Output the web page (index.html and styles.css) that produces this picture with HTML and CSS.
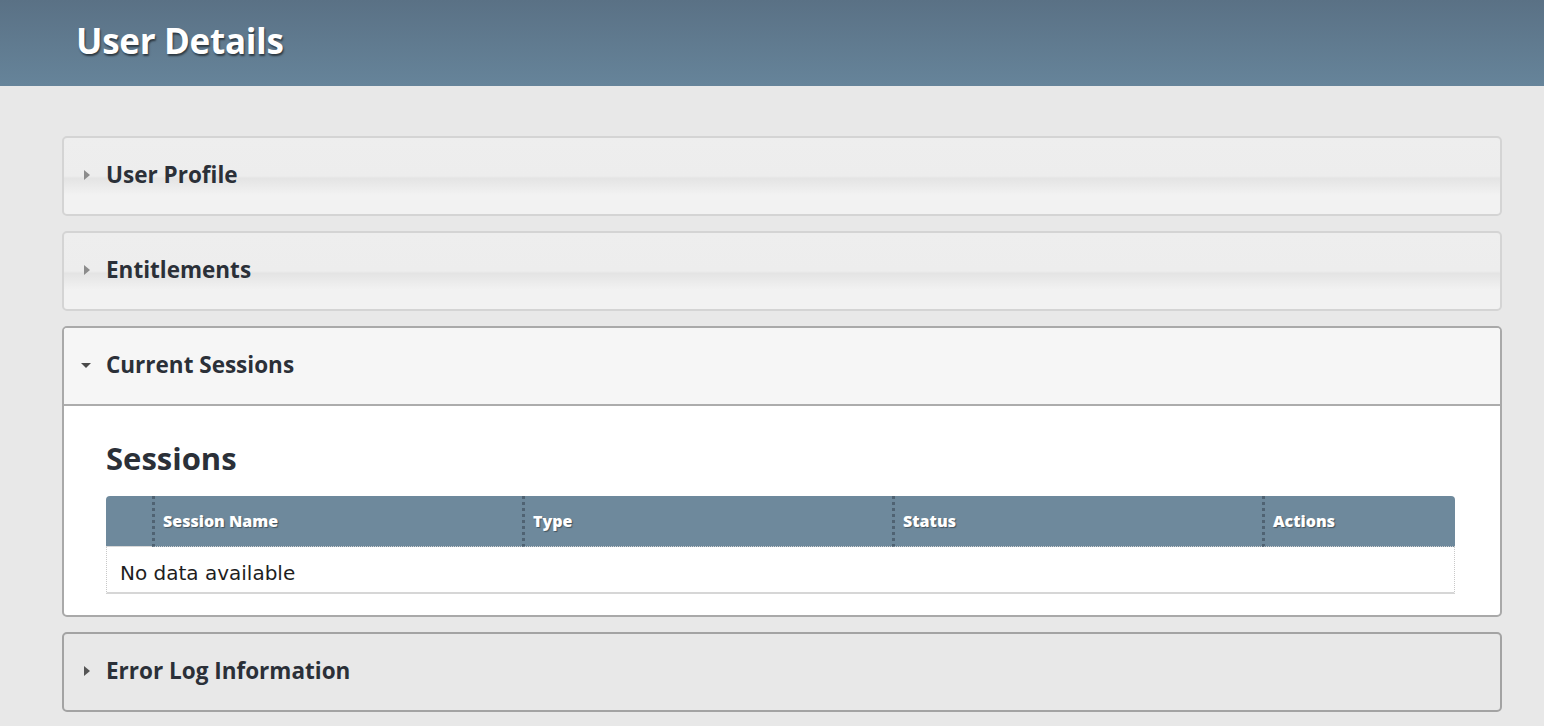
FILE: index.html
```html
<!DOCTYPE html>
<html lang="en">
<head>
<meta charset="utf-8">
<title>User Details</title>
<link rel="stylesheet" href="styles.css">
</head>
<body>
<header class="topbar">
  <h1 class="page-title">User Details</h1>
</header>
<main class="content">
  <section class="panel panel-glass">
    <div class="panel-head"><span class="caret caret-right"></span><span class="panel-title">User Profile</span></div>
  </section>
  <section class="panel panel-glass">
    <div class="panel-head"><span class="caret caret-right"></span><span class="panel-title">Entitlements</span></div>
  </section>
  <section class="panel panel-open">
    <div class="panel-head panel-head-open"><span class="caret caret-down"></span><span class="panel-title">Current Sessions</span></div>
    <div class="panel-body">
      <h2 class="section-title">Sessions</h2>
      <table class="grid">
        <colgroup>
          <col class="w-sel">
          <col class="w-col">
          <col class="w-col">
          <col class="w-col">
          <col>
        </colgroup>
        <thead>
          <tr>
            <th class="col-sel"></th>
            <th class="col">Session Name</th>
            <th class="col">Type</th>
            <th class="col">Status</th>
            <th class="col col-last">Actions</th>
          </tr>
        </thead>
        <tbody>
          <tr><td class="empty" colspan="5">No data available</td></tr>
        </tbody>
      </table>
    </div>
  </section>
  <section class="panel panel-dark">
    <div class="panel-head"><span class="caret caret-right caret-dark"></span><span class="panel-title">Error Log Information</span></div>
  </section>
</main>
</body>
</html>
```

FILE: styles.css
```css
html, body {
  margin: 0;
  padding: 0;
}
body {
  background: #e8e8e8;
  font-family: "Open Sans", Lato, "DejaVu Sans", sans-serif;
  color: #2b3038;
}
.topbar {
  height: 86px;
  box-sizing: border-box;
  padding: 0 0 5px 76px;
  display: flex;
  align-items: center;
  background: linear-gradient(#5a7185, #66849a);
}
.page-title {
  margin: 0;
  font-size: 35px;
  font-weight: 700;
  color: #ffffff;
  letter-spacing: -0.3px;
  text-shadow: 1px 2px 2px rgba(0, 0, 0, 0.55);
}
.content {
  padding: 50px 42px 20px 62px;
  display: flex;
  flex-direction: column;
  gap: 15px;
}
.panel {
  border: 2px solid #d4d4d4;
  border-radius: 5px;
  overflow: hidden;
}
.panel-glass {
  background: linear-gradient(#eeeeee 0%, #ededed 50%, #e4e4e4 53%, #f2f2f2 75%, #f2f2f2 100%);
}
.panel-open {
  border-color: #a9a9a9;
  background: #ffffff;
}
.panel-dark {
  border-color: #a3a3a3;
  background: #e8e8e8;
}
.panel-head {
  height: 76px;
  display: flex;
  align-items: center;
  padding: 0 0 4px 20px;
  box-sizing: border-box;
}
.panel-head-open {
  background: #f6f6f6;
  border-bottom: 2px solid #acacac;
  height: 78px;
}
.panel-title {
  font-size: 22.5px;
  font-weight: 700;
  color: #2b3038;
}
.caret {
  width: 0;
  height: 0;
  margin-top: 2px;
}
.caret-right {
  border-top: 5px solid transparent;
  border-bottom: 5px solid transparent;
  border-left: 6px solid #8c8c8c;
  margin-left: 0;
  margin-right: 16px;
}
.caret-dark {
  border-left-color: #555555;
}
.caret-down {
  border-left: 5px solid transparent;
  border-right: 5px solid transparent;
  border-top: 5px solid #4a4a4a;
  margin-left: -3px;
  margin-right: 15px;
}
.panel-body {
  padding: 32px 45px 21px 42px;
}
.section-title {
  margin: 0 0 18px 0;
  font-size: 31px;
  font-weight: 700;
  color: #2b3038;
  line-height: 40px;
}
.grid {
  width: 100%;
  table-layout: fixed;
  border-collapse: separate;
  border-spacing: 0;
}
.grid col.w-sel {
  width: 46px;
}
.grid col.w-col {
  width: 370px;
}
.grid thead th {
  height: 50px;
  background: #6e899c;
  color: #ffffff;
  font-size: 16px;
  font-weight: 800;
  text-align: left;
  padding: 0 0 0 8px;
  text-shadow: 1px 1px 1px rgba(0, 0, 0, 0.4);
  border-bottom: 1px dotted #cfcfcf;
}
.grid thead th.col-sel {
  padding: 0;
  border-top-left-radius: 4px;
  border-bottom: 1px solid #d8d8d8;
}
.grid thead th.col {
  border-left: 3px dotted #4f6272;
}
.grid thead th.col-last {
  border-top-right-radius: 4px;
}
.grid td.empty {
  height: 38px;
  padding: 7px 0 0 13px;
  font-family: "DejaVu Sans", Verdana, sans-serif;
  font-size: 20px;
  color: #1e1e1e;
  border-left: 1px dotted #c8c8c8;
  border-right: 1px dotted #c8c8c8;
  border-bottom: 2px solid #d6d6d6;
}
```
